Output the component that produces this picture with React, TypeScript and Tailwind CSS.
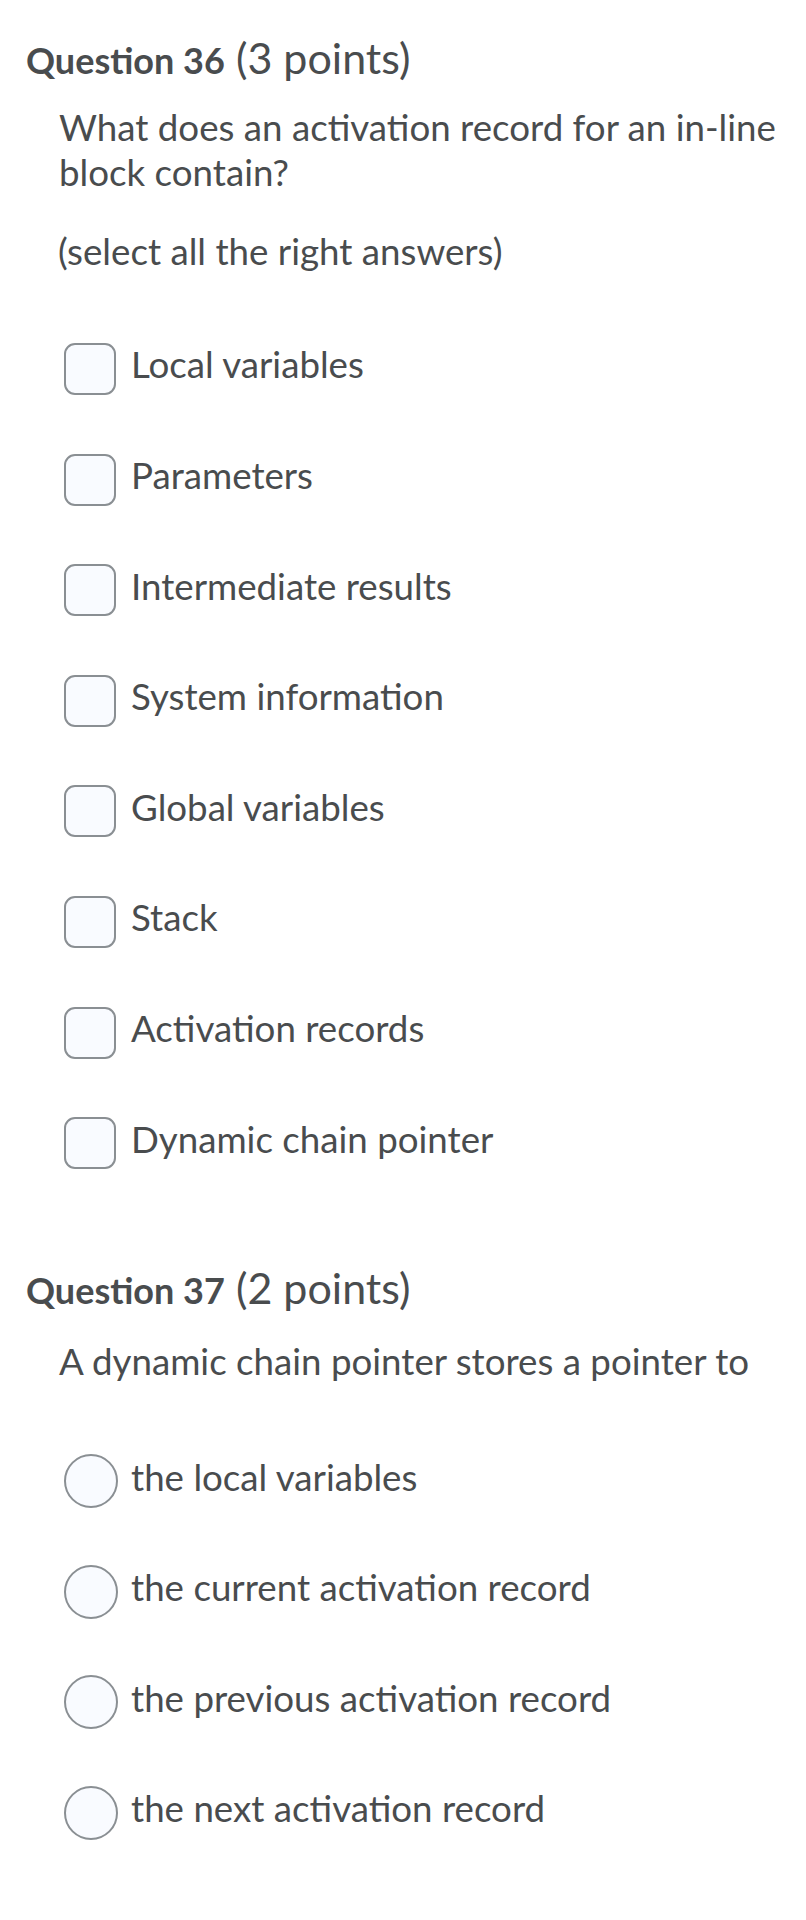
const checkOptions = [
  "Local variables",
  "Parameters",
  "Intermediate results",
  "System information",
  "Global variables",
  "Stack",
  "Activation records",
  "Dynamic chain pointer",
];

const radioOptions = [
  "the local variables",
  "the current activation record",
  "the previous activation record",
  "the next activation record",
];

function Heading({ num, points }: { num: number; points: number }) {
  return (
    <h2 className="pl-[26px] text-[36px] leading-[40px] text-[#494c4e]">
      <span className="font-bold">Question {num}</span>
      <span className="text-[43px] font-normal"> ({points} points)</span>
    </h2>
  );
}

function Option({ label, round }: { label: string; round?: boolean }) {
  return (
    <label className="flex h-[52px] items-center pl-[64px]">
      <span
        className={
          round
            ? "h-[54px] w-[54px] shrink-0 rounded-full border-2 border-[#8a8f93] bg-[#f9fbff]"
            : "h-[52px] w-[52px] shrink-0 rounded-[11px] border-2 border-[#8a8f93] bg-[#f9fbff]"
        }
      />
      <span
        className={
          round
            ? "ml-[13px] pb-[8px] text-[36.7px] text-[#494c4e]"
            : "ml-[15px] pb-[8px] text-[36.7px] text-[#494c4e]"
        }
      >
        {label}
      </span>
    </label>
  );
}

export default function App() {
  return (
    <div
      className="min-h-[1920px] w-[806px] bg-white pt-[38px]"
      style={{ fontFamily: "Lato, 'Open Sans', sans-serif" }}
    >
      <Heading num={36} points={3} />
      <p className="mt-[25px] pl-[59px] pr-[20px] text-[36.7px] leading-[45px] text-[#494c4e]">
        What does an activation record for an in-line block contain?
      </p>
      <p className="mt-[35px] pl-[58px] text-[36.7px] leading-[42px] text-[#494c4e]">
        (select all the right answers)
      </p>
      <div className="mt-[71px] flex flex-col gap-[58.6px]">
        {checkOptions.map((o) => (
          <Option key={o} label={o} />
        ))}
      </div>

      <div className="mt-[99px]">
        <Heading num={37} points={2} />
      </div>
      <p className="mt-[30px] pl-[59px] text-[36.7px] leading-[42px] text-[#494c4e]">
        A dynamic chain pointer stores a pointer to
      </p>
      <div className="mt-[73px] flex flex-col gap-[58.6px]">
        {radioOptions.map((o) => (
          <Option key={o} label={o} round />
        ))}
      </div>
    </div>
  );
}
